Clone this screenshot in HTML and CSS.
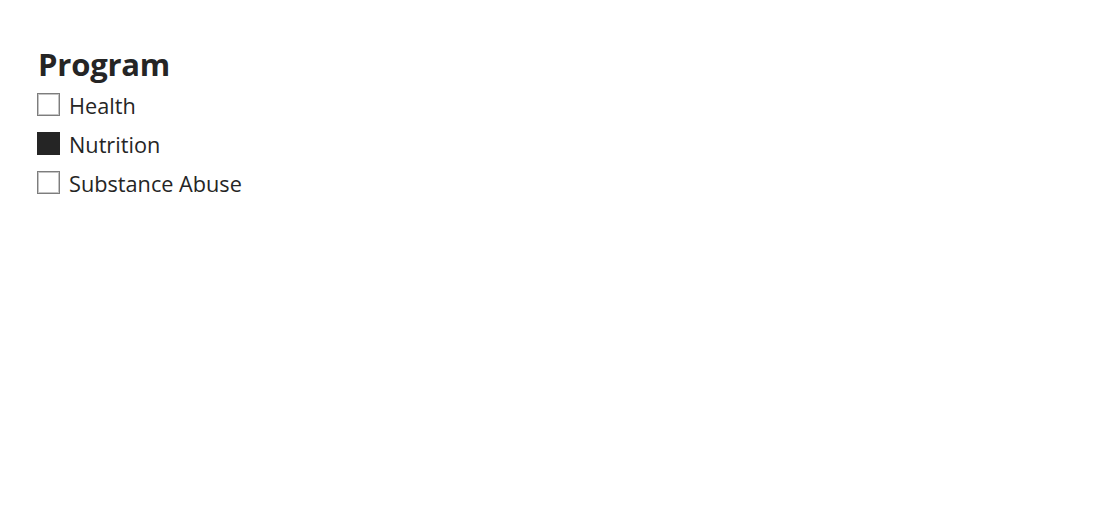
FILE: index.html
```html
<!DOCTYPE html>
<html>
<head>
<meta charset="utf-8">
<link rel="stylesheet" href="styles.css">
</head>
<body>
<div class="panel">
  <h2 class="title">Program</h2>
  <ul class="list">
    <li class="item"><span class="box"></span><span class="label">Health</span></li>
    <li class="item"><span class="box checked"></span><span class="label">Nutrition</span></li>
    <li class="item"><span class="box"></span><span class="label">Substance Abuse</span></li>
  </ul>
</div>
</body>
</html>
```

FILE: styles.css
```css
html, body {
  margin: 0;
  padding: 0;
  background: #ffffff;
}
body {
  font-family: "Open Sans", "Noto Sans", sans-serif;
  color: #252525;
}
.panel {
  padding: 44px 0 0 38px;
}
.title {
  margin: 0;
  font-size: 31px;
  font-weight: 700;
  line-height: 40px;
  letter-spacing: -0.2px;
  color: #252525;
}
.list {
  list-style: none;
  margin: 9px 0 0 0;
  padding: 0;
  display: flex;
  flex-direction: column;
  gap: 16px;
}
.item {
  display: flex;
  align-items: center;
  gap: 9px;
  height: 23px;
  margin-left: -1px;
}
.box {
  box-sizing: border-box;
  width: 23px;
  height: 23px;
  border: 1px solid #7d7d7d;
  box-shadow: inset 0 0 0 1px #c4c4c4;
  background: #fff;
  flex: none;
}
.box.checked {
  background: #252525;
  border-color: #252525;
  box-shadow: none;
}
.label {
  font-size: 21.7px;
  line-height: 23px;
  padding-top: 2px;
  color: #252525;
}
```
